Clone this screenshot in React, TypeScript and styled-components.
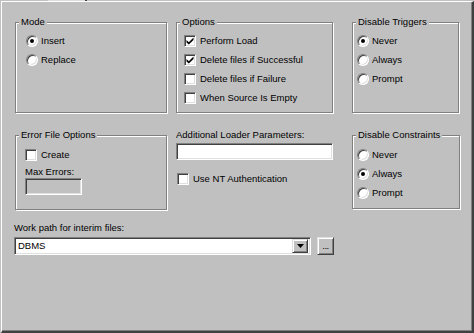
import React from "react";
import styled, { createGlobalStyle, css } from "styled-components";

const Global = createGlobalStyle`
  html, body { margin: 0; padding: 0; background: #c0c0c0; }
  body {
    font-family: "Liberation Sans", Arial, sans-serif;
    font-size: 9.5px;
    line-height: 12px;
    color: #000;
  }
`;

const sunken = css`
  box-sizing: border-box;
  border: 1px solid;
  border-color: #808080 #ffffff #ffffff #808080;
  box-shadow: inset 1px 1px 0 #404040, inset -1px -1px 0 #dfdfdf;
`;

const raised = css`
  box-sizing: border-box;
  border: 1px solid;
  border-color: #dfdfdf #404040 #404040 #dfdfdf;
  box-shadow: inset 1px 1px 0 #ffffff, inset -1px -1px 0 #808080;
  background: #c0c0c0;
`;

const Screen = styled.div`
  width: 474px;
  height: 333px;
  background: #c0c0c0;
  display: flex;
  flex-direction: column;
  overflow: hidden;
`;

const TabStrip = styled.div`
  height: 1px;
  flex: none;
  display: flex;
`;

const TabStub = styled.div`
  margin-left: 48px;
  width: 37px;
  background: #dcdcdc;
  border-right: 2px solid #404040;
`;

const Page = styled.div`
  flex: 1;
  margin-left: 1px;
  box-sizing: border-box;
  border-top: 1px solid #ffffff;
  border-left: 1px solid #ffffff;
  border-right: 2px solid #404040;
  border-bottom: 2px solid #404040;
  box-shadow: inset -1px -1px 0 #808080;
  padding: 14px 0 0 12px;
  display: flex;
  flex-direction: column;
`;

const Grid = styled.div`
  margin-left: 1px;
  display: grid;
  grid-template-columns: 152px 167px 107px;
  grid-template-rows: 97px 81px;
  column-gap: 9px;
  row-gap: 16px;
  justify-items: start;
`;

const Group = styled.fieldset<{ $h: number; $w: number }>`
  margin: 0;
  padding: 0;
  min-width: 0;
  min-inline-size: 0;
  box-sizing: border-box;
  width: ${(p) => p.$w}px;
  height: ${(p) => p.$h}px;
  align-self: start;
  border: 1px solid #808080;
  box-shadow: 1px 1px 0 #ffffff, inset 1px 1px 0 #ffffff;
`;

const Caption = styled.legend`
  margin-left: 3px;
  padding: 0 2px;
  line-height: 12px;
  background: #c0c0c0;
  white-space: nowrap;
`;

const Stack = styled.div<{ $pl: number; $pt: number }>`
  display: flex;
  flex-direction: column;
  gap: 6px;
  padding: ${(p) => p.$pt}px 0 0 ${(p) => p.$pl}px;
`;

const Row = styled.label`
  display: flex;
  align-items: center;
  height: 13px;
  gap: 3px;
  white-space: nowrap;
`;

const CheckRow = styled(Row)`
  gap: 4px;
`;

const RadioMark = styled.span<{ $on?: boolean }>`
  flex: none;
  width: 12px;
  height: 12px;
  box-sizing: border-box;
  border-radius: 50%;
  background: #ffffff;
  border: 1px solid;
  border-color: #808080 #ffffff #ffffff #808080;
  box-shadow: inset 1px 1px 0 #404040, inset -1px -1px 0 #dfdfdf;
  display: flex;
  align-items: center;
  justify-content: center;
  &::after {
    content: "";
    width: 4px;
    height: 4px;
    border-radius: 50%;
    background: #000;
    display: ${(p) => (p.$on ? "block" : "none")};
  }
`;

const CheckBox = styled.span`
  flex: none;
  width: 12px;
  height: 12px;
  background: #ffffff;
  ${sunken};
  display: flex;
  align-items: center;
  justify-content: center;
`;

const Field = styled.div<{ $w: number; $disabled?: boolean }>`
  ${sunken};
  width: ${(p) => p.$w}px;
  height: 17px;
  background: ${(p) => (p.$disabled ? "#c0c0c0" : "#ffffff")};
`;

const FieldLabel = styled.div<{ $mt?: number }>`
  line-height: 12px;
  margin-top: ${(p) => p.$mt ?? 0}px;
  white-space: nowrap;
`;

const MiddleColumn = styled.div`
  display: flex;
  flex-direction: column;
  gap: 2px;
`;

const NTRow = styled(CheckRow)`
  margin-top: 10px;
  padding-left: 1px;
`;

const ErrorBody = styled.div`
  display: flex;
  flex-direction: column;
  padding: 7px 0 0 9px;
`;

const Footer = styled.div`
  margin-top: 12px;
  display: flex;
  flex-direction: column;
  gap: 3px;
`;

const PathRow = styled.div`
  display: flex;
  gap: 6px;
`;

const Combo = styled.div`
  ${sunken};
  width: 297px;
  height: 18px;
  background: #ffffff;
  display: flex;
  align-items: center;
  padding: 2px 2px 2px 3px;
`;

const ComboText = styled.span`
  flex: 1;
  line-height: 12px;
`;

const DropButton = styled.span`
  ${raised};
  width: 16px;
  height: 14px;
  display: flex;
  align-items: center;
  justify-content: center;
`;

const BrowseButton = styled.div`
  ${raised};
  width: 17px;
  height: 18px;
  display: flex;
  align-items: flex-end;
  justify-content: center;
  padding-bottom: 3px;
  line-height: 10px;
  letter-spacing: -0.5px;
`;

const Check = ({ on }: { on?: boolean }) => (
  <CheckBox>
    {on && (
      <svg width="8" height="8" viewBox="0 0 8 8">
        <polygon points="0.5,3 2.8,5.2 7.5,0.5 7.5,3 2.8,7.6 0.5,5.4" fill="#000" />
      </svg>
    )}
  </CheckBox>
);

const Radio = ({ on, label }: { on?: boolean; label: string }) => (
  <Row>
    <RadioMark $on={on} />
    <span>{label}</span>
  </Row>
);

const CheckItem = ({ on, label }: { on?: boolean; label: string }) => (
  <CheckRow>
    <Check on={on} />
    <span>{label}</span>
  </CheckRow>
);

export default function App() {
  return (
    <>
      <Global />
      <Screen>
        <TabStrip>
          <TabStub />
        </TabStrip>
        <Page>
          <Grid>
            <Group $h={97} $w={152}>
              <Caption>Mode</Caption>
              <Stack $pl={10} $pt={6}>
                <Radio on label="Insert" />
                <Radio label="Replace" />
              </Stack>
            </Group>

            <Group $h={97} $w={157}>
              <Caption>Options</Caption>
              <Stack $pl={7} $pt={6}>
                <CheckItem on label="Perform Load" />
                <CheckItem on label="Delete files if Successful" />
                <CheckItem label="Delete files if Failure" />
                <CheckItem label="When Source Is Empty" />
              </Stack>
            </Group>

            <Group $h={97} $w={107}>
              <Caption>Disable Triggers</Caption>
              <Stack $pl={4} $pt={6}>
                <Radio on label="Never" />
                <Radio label="Always" />
                <Radio label="Prompt" />
              </Stack>
            </Group>

            <Group $h={81} $w={152}>
              <Caption>Error File Options</Caption>
              <ErrorBody>
                <CheckItem label="Create" />
                <FieldLabel $mt={5}>Max Errors:</FieldLabel>
                <Field $w={57} $disabled />
              </ErrorBody>
            </Group>

            <MiddleColumn>
              <FieldLabel>Additional Loader Parameters:</FieldLabel>
              <Field $w={157} />
              <NTRow>
                <Check />
                <span>Use NT Authentication</span>
              </NTRow>
            </MiddleColumn>

            <Group $h={80} $w={108}>
              <Caption>Disable Constraints</Caption>
              <Stack $pl={4} $pt={7}>
                <Radio label="Never" />
                <Radio on label="Always" />
                <Radio label="Prompt" />
              </Stack>
            </Group>
          </Grid>

          <Footer>
            <FieldLabel>Work path for interim files:</FieldLabel>
            <PathRow>
              <Combo>
                <ComboText>DBMS</ComboText>
                <DropButton>
                  <svg width="7" height="4" viewBox="0 0 7 4">
                    <polygon points="0,0 7,0 3.5,4" fill="#000" />
                  </svg>
                </DropButton>
              </Combo>
              <BrowseButton>...</BrowseButton>
            </PathRow>
          </Footer>
        </Page>
      </Screen>
    </>
  );
}
